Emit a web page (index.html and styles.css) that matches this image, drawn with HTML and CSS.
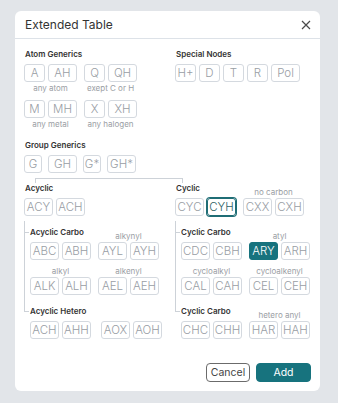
FILE: index.html
```html
<!DOCTYPE html>
<html>
<head>
<meta charset="utf-8">
<link rel="stylesheet" href="styles.css">
</head>
<body>
<div class="dialog">
  <div class="header">
    <span class="title">Extended Table</span>
    <span class="close"><svg width="10" height="10" viewBox="0 0 10 10"><path d="M1 1L9 9M9 1L1 9" stroke="#4a4a4a" stroke-width="1.2" fill="none"/></svg></span>
  </div>
  <div class="body">
    <div class="cols">
      <section>
        <h3 class="sec-title">Atom Generics</h3>
        <div class="row">
          <div class="group"><div class="btns"><span class="btn n">A</span><span class="btn w">AH</span></div><div class="label-b">any atom</div></div>
          <div class="group"><div class="btns"><span class="btn n">Q</span><span class="btn w">QH</span></div><div class="label-b">exept C or H</div></div>
        </div>
        <div class="row">
          <div class="group"><div class="btns"><span class="btn n">M</span><span class="btn w">MH</span></div><div class="label-b">any metal</div></div>
          <div class="group"><div class="btns"><span class="btn n">X</span><span class="btn w">XH</span></div><div class="label-b">any halogen</div></div>
        </div>
      </section>
      <section>
        <h3 class="sec-title">Special Nodes</h3>
        <div class="btns">
          <span class="btn n">H+</span><span class="btn n">D</span><span class="btn n">T</span><span class="btn n">R</span><span class="btn w">Pol</span>
        </div>
      </section>
    </div>

    <section class="gg">
      <h3 class="sec-title">Group Generics</h3>
      <div class="btns gg-btns">
        <span class="btn s">G</span><span class="btn w">GH</span><span class="btn s">G*</span><span class="btn w">GH*</span>
      </div>
    </section>

    <div class="connector"></div>

    <div class="cols">
      <section class="branch">
        <h3 class="sec-title top">Acyclic</h3>
        <div class="row">
          <div class="group"><div class="label-t"></div><div class="btns"><span class="btn w">ACY</span><span class="btn w">ACH</span></div></div>
        </div>
        <div class="children">
          <div class="sub">
            <h4 class="sub-title">Acyclic Carbo</h4>
            <div class="row">
              <div class="group"><div class="label-t"></div><div class="btns"><span class="btn w">ABC</span><span class="btn w">ABH</span></div></div>
              <div class="group"><div class="label-t">alkynyl</div><div class="btns"><span class="btn w">AYL</span><span class="btn w">AYH</span></div></div>
            </div>
            <div class="row r2">
              <div class="group"><div class="label-t">alkyl</div><div class="btns"><span class="btn w">ALK</span><span class="btn w">ALH</span></div></div>
              <div class="group"><div class="label-t">alkenyl</div><div class="btns"><span class="btn w">AEL</span><span class="btn w">AEH</span></div></div>
            </div>
          </div>
          <div class="sub">
            <h4 class="sub-title">Acyclic Hetero</h4>
            <div class="row wide-gap">
              <div class="group"><div class="label-t"></div><div class="btns"><span class="btn w">ACH</span><span class="btn w">AHH</span></div></div>
              <div class="group"><div class="label-t"></div><div class="btns"><span class="btn w">AOX</span><span class="btn w">AOH</span></div></div>
            </div>
          </div>
        </div>
      </section>

      <section class="branch">
        <h3 class="sec-title top">Cyclic</h3>
        <div class="row">
          <div class="group"><div class="label-t"></div><div class="btns"><span class="btn w">CYC</span><span class="btn w selected">CYH</span></div></div>
          <div class="group"><div class="label-t">no carbon</div><div class="btns"><span class="btn w">CXX</span><span class="btn w">CXH</span></div></div>
        </div>
        <div class="children">
          <div class="sub">
            <h4 class="sub-title">Cyclic Carbo</h4>
            <div class="row">
              <div class="group"><div class="label-t"></div><div class="btns"><span class="btn w">CDC</span><span class="btn w">CBH</span></div></div>
              <div class="group"><div class="label-t">atyl</div><div class="btns"><span class="btn w active">ARY</span><span class="btn w">ARH</span></div></div>
            </div>
            <div class="row r2">
              <div class="group"><div class="label-t">cycloalkyl</div><div class="btns"><span class="btn w">CAL</span><span class="btn w">CAH</span></div></div>
              <div class="group"><div class="label-t">cycloalkenyl</div><div class="btns"><span class="btn w">CEL</span><span class="btn w">CEH</span></div></div>
            </div>
          </div>
          <div class="sub">
            <h4 class="sub-title">Cyclic Carbo</h4>
            <div class="row">
              <div class="group"><div class="label-t"></div><div class="btns"><span class="btn w">CHC</span><span class="btn w">CHH</span></div></div>
              <div class="group"><div class="label-t">hetero anyl</div><div class="btns"><span class="btn w">HAR</span><span class="btn w">HAH</span></div></div>
            </div>
          </div>
        </div>
      </section>
    </div>
  </div>
  <div class="footer">
    <button class="cancel">Cancel</button>
    <button class="add">Add</button>
  </div>
</div>
</body>
</html>
```

FILE: styles.css
```css
html, body {
  margin: 0;
  padding: 0;
}
body {
  background: #e2e5e9;
  font-family: Inter, "Noto Sans", "Liberation Sans", sans-serif;
  width: 338px;
  height: 403px;
  overflow: hidden;
}
.dialog {
  margin: 11px 0 0 15px;
  width: 305px;
  height: 380px;
  background: #fff;
  border-radius: 6px;
  display: flex;
  flex-direction: column;
}
.header {
  height: 27px;
  border-bottom: 1px solid #dde2e8;
  display: flex;
  align-items: center;
  justify-content: space-between;
  padding: 0 9px 0 10px;
}
.title {
  font-size: 12px;
  color: #333;
}
.close {
  display: flex;
  width: 10px;
  height: 10px;
}
.body {
  padding: 10px 9px 0 9px;
}
.cols {
  display: grid;
  grid-template-columns: 151px 1fr;
}
.sec-title {
  margin: 0 0 5px 1px;
  font-size: 8px;
  font-weight: 600;
  line-height: 10px;
  color: #333;
}
.sec-title.top {
  margin-bottom: -6px;
}
.row {
  display: flex;
  gap: 7px;
}
.row + .row {
  margin-top: 7px;
}
.row.r2 {
  margin-top: 6px;
}
.row.wide-gap {
  gap: 10px;
}
.group {
  display: flex;
  flex-direction: column;
  align-items: center;
}
.btns {
  display: flex;
  gap: 3px;
}
.btn {
  box-sizing: border-box;
  height: 18px;
  border: 1px solid #d4d9df;
  border-radius: 3px;
  display: flex;
  align-items: center;
  justify-content: center;
  font-size: 11.5px;
  font-weight: 300;
  color: #989da4;
  white-space: nowrap;
}
.btn.n { width: 21px; }
.btn.s { width: 18px; }
.btn.w { width: 29px; }
.btn.selected {
  border-color: #1f6d75;
  box-shadow: 0 0 0 1px #1f6d75;
  color: #2b5e64;
}
.btn.active {
  background: #17737e;
  border-color: #17737e;
  color: #fff;
}
.label-b {
  margin-top: 2px;
  line-height: 9px;
  font-size: 8px;
  color: #9a9ea4;
  white-space: nowrap;
}
.label-t {
  height: 10px;
  line-height: 10px;
  margin-bottom: 1px;
  font-size: 8px;
  color: #9a9ea4;
  white-space: nowrap;
}
.gg {
  margin-top: 11px;
}
.gg-btns {
  gap: 6px;
}
.connector {
  box-sizing: border-box;
  margin: 5px 0 0 11px;
  width: 148px;
  height: 5px;
  border: 1px solid #cdd2d8;
  border-bottom: none;
}
.children {
  margin-top: 11px;
  padding-left: 6px;
}
.sub {
  position: relative;
}
.sub + .sub {
  margin-top: 11px;
}
.sub::before {
  content: "";
  position: absolute;
  left: -6px;
  top: 0;
  bottom: -11px;
  border-left: 1px solid #cdd2d8;
}
.sub:first-child::before {
  top: -6px;
}
.sub:last-child::before {
  bottom: auto;
  height: 5px;
}
.sub::after {
  content: "";
  position: absolute;
  left: -6px;
  top: 5px;
  width: 5px;
  border-top: 1px solid #cdd2d8;
}
.sub-title {
  margin: 0 0 -6px 0;
  font-size: 8px;
  font-weight: 600;
  line-height: 10px;
  color: #333;
}
.footer {
  margin-top: auto;
  display: flex;
  justify-content: flex-end;
  gap: 6px;
  padding: 0 9px 9px;
}
.footer button {
  box-sizing: border-box;
  height: 19px;
  border-radius: 4px;
  font-family: Inter, "Noto Sans", sans-serif;
  font-size: 10.5px;
  padding: 0;
  display: flex;
  align-items: center;
  justify-content: center;
}
.cancel {
  width: 44px;
  background: #fff;
  border: 1px solid #6b6b6b;
  color: #444;
}
.add {
  width: 55px;
  background: #17737e;
  border: 1px solid #17737e;
  color: #fff;
}
```
